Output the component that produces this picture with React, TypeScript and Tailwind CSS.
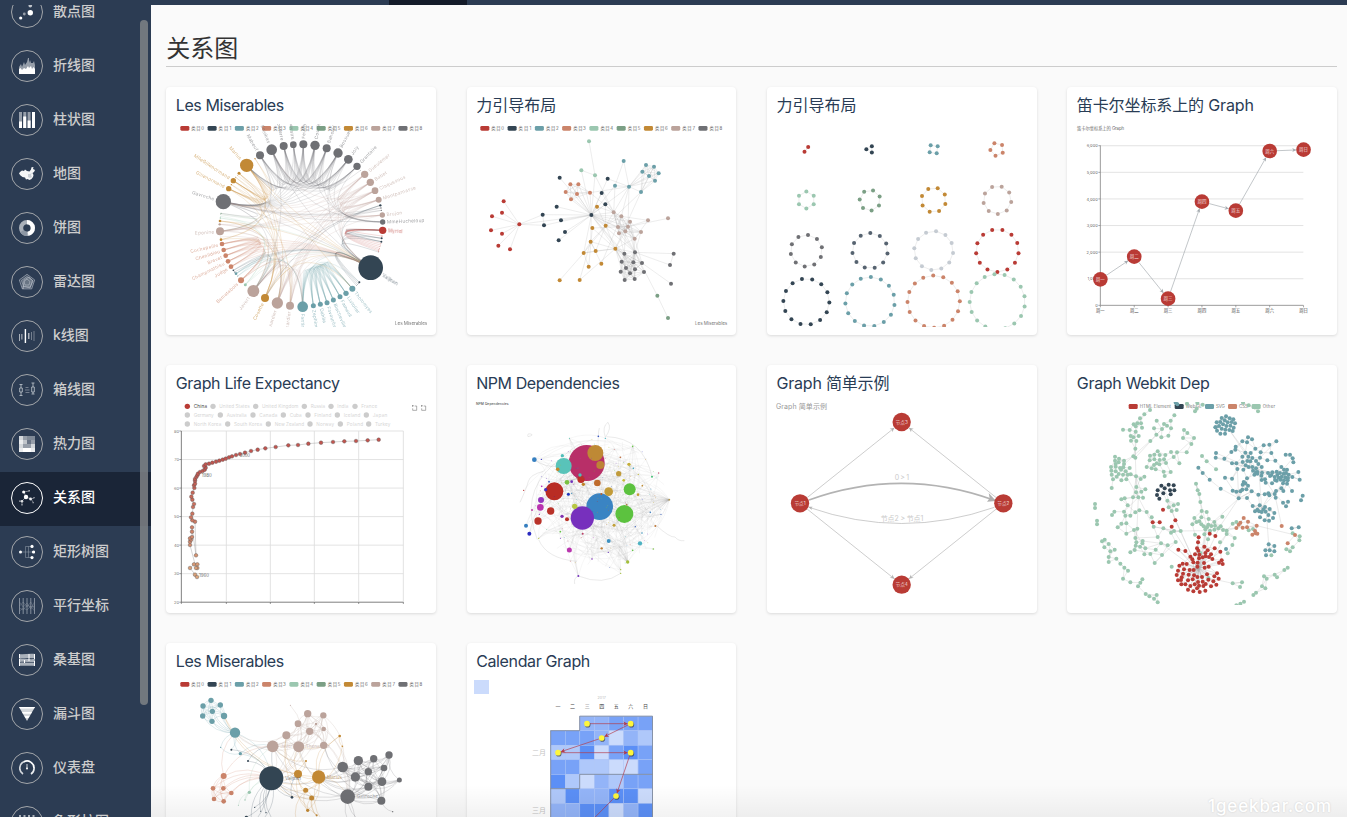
import type { ReactNode } from "react";

type Point = [number, number];
type NodeDef = [number, number, number]; // x, y, r

const PALETTE = [
  "#b93b35", "#334553", "#6b9fa8", "#cb846a", "#9bc7b0",
  "#7b9f85", "#c28935", "#bba39b", "#6f7074",
];

const parsePoints = (s: string): Point[] =>
  s.trim().split(/\s+/).map((p) => p.split(",").map(Number) as Point);

const parseNodes = (s: string): NodeDef[] =>
  s.trim().split(/\s+/).map((p) => p.split(",").map(Number) as NodeDef);

// small seeded generator so the dense graphs always come out the same
function seeded(seed: number) {
  let s = seed;
  return () => {
    s = (s * 16807) % 2147483647;
    return s / 2147483647;
  };
}

/* ---------- sidebar ---------- */

const CHINA = "M1 6L3 4.5L5 5L6 3.5L8 5L10.5 5.5L12 3.5L12.5 1.2L14.5 1L14 3L16 4L15 6L13.5 7L14.5 9L14 11L12.5 13L10.5 14L8.5 13L7 13.5L6 11.5L3.5 11L1.5 9.5L0 7.5Z";

const HEAT = [8, 5, 4, 4, 9, 7, 3, 5, 8, 5, 5, 8, 9, 10, 10, 9];

const icons: Record<string, ReactNode> = {
  scatter: (
    <>
      <circle cx="11.3" cy="1.7" r="1.8" opacity=".7" />
      <circle cx="11.3" cy="8.7" r="2.7" />
      <circle cx="5.3" cy="10" r="1.4" opacity=".5" />
      <circle cx="1.7" cy="14" r="1.6" />
    </>
  ),
  line: (
    <>
      <path opacity=".5" d="M0 16V9l2-3 1 3 2-5 1 3 2-3 1-4h1v5l1-3 1 3 2 0 1-2 1 4v9z" />
      <path d="M0 16v-5l1.500-1 1.500 2 2-2 2 1 2-3 1 2 2-2 1 3 1.500-2L16 11v5z" />
    </>
  ),
  bar: (
    <>
      <path opacity=".5" d="M0 0h3v16h-3zM4.300 0h3v16h-3zM8.600 0h3v16h-3z" />
      <path d="M0 9.500h3V16H0zM4.200 4.500h3V16h-3zM8.600 8.500h3V16h-3zM13 0h3v16h-3z" />
    </>
  ),
  map: (
    <>
      <path opacity=".95" d={CHINA} />
      <path fill="#9aa4b0" d="M9 8h2l2-1-1 2 1 2-2 1-2-1z" opacity=".45" />
    </>
  ),
  pie: (
    <g fill="none" strokeWidth="4.200">
      <circle cx="8" cy="8" r="5.900" stroke="#aab1ba" />
      <path d="M8 13.900A5.900 5.900 0 0 1 3 11.200" stroke="#8d97a4" />
      <path d="M8 2.100A5.900 5.900 0 0 1 9 13.800" stroke="#fff" />
    </g>
  ),
  radar: (
    <g fill="#ffffff1c" stroke="#b9c0c9" strokeWidth=".6">
      <path d="M8 .3l7.700 5.600-3 9H3.300l-3-9z" />
      <path d="M8 2.500l5.500 4-2.200 6.500H4.700L2.500 6.500z" />
      <path d="M8 5l3 2.500-1 3.500H6L5 7.500zM4 15l1-9 5-3 4 4-3 7-7-2z" />
    </g>
  ),
  candle: (
    <>
      <path d="M5.700 1h1.400v14H5.700z" />
      <path opacity=".85" d="M2.500 6h.8v5.500h-.8z" />
      <path opacity=".6" d="M0 6h1v7H0zM9 5h1.500v6H9z" />
      <path opacity=".35" d="M12 4h1v8h-1zM14.500 3h1v10h-1z" />
    </>
  ),
  box: (
    <g fill="none" stroke="#c3c9d0" strokeWidth=".8">
      <path d="M.500 2.500h3M2 2.500V6M.700 6h2.600v4H.700zM2 10v3.500M.500 13.500h3" />
      <path opacity=".6" d="M6.500 5.500h3M6 8h4.500M6.500 10.500h4" />
      <path d="M12.500 1h3M14 1v4M12.700 5h2.600v5h-2.600zM14 10v2M12.500 12h3" />
    </g>
  ),
  heat: (
    <g shapeRendering="crispEdges">
      {HEAT.map((v, i) => (
        <rect key={i} x={(i % 4) * 4} y={Math.floor(i / 4) * 4} width="4" height="4" opacity={v / 10} />
      ))}
    </g>
  ),
  graph: (
    <>
      <path stroke="#fff" strokeWidth=".6" opacity=".7" fill="none" d="M7 7L5 2L10 1M7 7L12 9L15 8M12 9L14 12M7 7L3 11L1 11M3 11L3 14M5 2L3 2" />
      <circle cx="7" cy="7" r="2.200" />
      <circle cx="4.700" cy="2" r="1.500" />
      <circle cx="11.500" cy="9" r="1.400" opacity=".9" />
      <circle cx="3" cy="11.300" r="1.300" opacity=".8" />
      <path opacity=".6" d="M9.500 0h1.500v1.500H9.500zM14.500 7h1.200v1.200h-1.200zM13.500 12h1.300v1.300h-1.300zM0 10.500h1.200v1.200H0zM2.300 14h1.400v1.400H2.300z" />
    </>
  ),
  tree: (
    <>
      <path fill="none" stroke="#9aa4b0" strokeWidth=".5" d="M1 8h14M6.500 2.500h7M6.500 2.500v11h7M9.500 2.500v11" />
      <circle cx="1.500" cy="8" r="1.500" />
      <circle cx="13" cy="2.400" r="1.600" />
      <circle cx="14.500" cy="8" r="1.600" />
      <circle cx="13" cy="13.600" r="1.600" />
    </>
  ),
  parallel: (
    <g fill="none" stroke="#98a1ad" strokeWidth=".5">
      <path strokeWidth=".8" d="M.500 0v16M4.200 0v16M8 0v16M11.800 0v16M15.500 0v16" />
      <path opacity=".7" d="M.500 4l3.700 5L8 5l3.800 6 3.700-7M.500 8L4.200 4 8 9l3.800-5 3.700 7M.500 13l3.700-3L8 12l3.800-4 3.700 5M.500 10l3.700 2L8 7l3.800 2 3.700-1" />
    </g>
  ),
  sankey: (
    <>
      <path opacity=".6" d="M0 2c5 .6 10-.6 16 0v4c-5 .6-10-.6-16 .4zM0 6.800c5-1 11 1.300 16 0v3.400c-5 .6-10-1-16 0zM0 10.700c5-.6 11 0 16 .3V14c-5-.6-11 0-16-.3z" />
      <path d="M0 2h1v4H0zM0 7h1v7H0zM15 2h1v5h-1zM15 9h1v5h-1zM9.500 2h1v7h-1zM5 8h1v3H5z" />
    </>
  ),
  funnel: (
    <>
      <path opacity=".8" d="M0 1h16L8 15z" />
      <path d="M0 1h16l-1 1.500H1zM3 6h10l-1 1.800H4zM5.500 10h5L9.500 12h-3z" />
    </>
  ),
  gauge: (
    <g fill="none">
      <path stroke="#d4d8dd" strokeWidth="1.700" d="M4 14A7 7 0 0 1 5.500 1.500" />
      <path stroke="#fff" strokeWidth="1.700" d="M5 1.700A7 7 0 0 1 15 8" />
      <path stroke="#eceef0" strokeWidth="1.700" d="M15 7.500A7 7 0 0 1 12 14" />
      <path stroke="#fff" strokeWidth=".8" d="M8 4v4" />
      <circle cx="8" cy="8.500" r="1" fill="#fff" />
    </g>
  ),
  pictorial: (
    <>
      {[1, 5.500, 10, 14.500].map((x) => (
        <path key={x} opacity=".6" d={`M${x} 1v14`} stroke="#fff" strokeWidth="2" strokeDasharray="2 1.500" />
      ))}
    </>
  ),
};

const menu: [string, string][] = [
  ["散点图", "scatter"], ["折线图", "line"], ["柱状图", "bar"], ["地图", "map"],
  ["饼图", "pie"], ["雷达图", "radar"], ["k线图", "candle"], ["箱线图", "box"],
  ["热力图", "heat"], ["关系图", "graph"], ["矩形树图", "tree"], ["平行坐标", "parallel"],
  ["桑基图", "sankey"], ["漏斗图", "funnel"], ["仪表盘", "gauge"], ["象形柱图", "pictorial"],
];

function Sidebar() {
  return (
    <aside className="relative w-[151px] shrink-0 overflow-hidden bg-[#2c3c53]">
      <ul className="-mt-[19px]">
        {menu.map(([label, icon]) => {
          const active = label === "关系图";
          return (
            <li
              key={label}
              className={`flex h-[54px] items-start pl-[11px] pt-[10px] ${
                active ? "bg-[#1a2537] text-white" : "text-[#cdcdcd]"
              }`}
            >
              <span
                className={`grid size-8 shrink-0 place-items-center rounded-full border ${
                  active ? "border-white" : "border-[#a3a6aa]"
                }`}
              >
                <svg className="size-4" viewBox="0 0 16 16" fill="#fff">
                  {icons[icon]}
                </svg>
              </span>
              <span className="ml-[10px] mt-[4px] whitespace-nowrap text-[14px] font-medium leading-[22px]">{label}</span>
            </li>
          );
        })}
      </ul>
      <div className="absolute left-[140px] top-[15px] h-[685px] w-2 rounded-full bg-[#858789]/80" />
    </aside>
  );
}

/* ---------- Les Miserables data ---------- */

const NAMES: Record<number, string> = {
  0: "Myriel", 11: "Valjean", 16: "Tholomyes", 17: "Listolier", 18: "Fameuil", 19: "Blacheville",
  20: "Favourite", 21: "Dahlia", 22: "Zephine", 23: "Fantine", 24: "MmeThenardier", 25: "Thenardier",
  26: "Cosette", 27: "Javert", 29: "Bamatabois", 34: "Judge", 35: "Champmathieu", 36: "Brevet",
  37: "Chenildieu", 38: "Cochepaille", 41: "Eponine", 48: "Gavroche", 49: "Gillenormand",
  51: "MlleGillenormand", 55: "Marius", 57: "Mabeuf", 58: "Enjolras", 59: "Combeferre",
  60: "Prouvaire", 61: "Feuilly", 62: "Courfeyrac", 63: "Bahorel", 64: "Bossuet", 65: "Joly",
  66: "Grantaire", 68: "Gueulemer", 69: "Babet", 70: "Claquesous", 71: "Montparnasse",
  75: "Brujon", 76: "MmeHucheloup",
};

const CATEGORY =
  "0011000000111111222222227767432211333336777644558666666668888888888877771887".split("").map(Number);
CATEGORY.push(8);

const LINKS: Record<number, number[]> = {
  1: [0], 2: [0], 3: [0, 2], 4: [0], 5: [0], 6: [0], 7: [0], 8: [0], 9: [0],
  11: [10, 3, 2, 0], 12: [11], 13: [11], 14: [11], 15: [11], 17: [16], 18: [16, 17],
  19: [16, 17, 18], 20: [16, 17, 18, 19], 21: [16, 17, 18, 19, 20], 22: [16, 17, 18, 19, 20, 21],
  23: [16, 17, 18, 19, 20, 21, 22, 12, 11], 24: [23, 11], 25: [24, 23, 11], 26: [24, 11, 16, 25],
  27: [11, 23, 25, 24, 26], 28: [11, 27], 29: [23, 27, 11], 30: [23], 31: [30, 11, 23, 27],
  32: [11], 33: [11, 27], 34: [11, 29], 35: [11, 34, 29], 36: [34, 35, 11, 29],
  37: [34, 35, 36, 11, 29], 38: [34, 35, 36, 37, 11, 29], 39: [25], 40: [25], 41: [24, 25],
  42: [41, 25, 24], 43: [11, 26, 27], 44: [28, 11], 45: [28], 47: [46], 48: [47, 25, 27, 11],
  49: [26, 11], 50: [49, 24], 51: [49, 26, 11], 52: [51, 39], 53: [51], 54: [51, 49, 26],
  55: [51, 49, 39, 54, 26, 11, 16, 25, 41, 48], 56: [49, 55], 57: [55, 41, 48],
  58: [55, 48, 27, 57, 11], 59: [58, 55, 48, 57], 60: [48, 58, 59], 61: [48, 58, 60, 59, 57, 55],
  62: [55, 58, 59, 48, 57, 41, 61, 60], 63: [59, 48, 62, 57, 58, 61, 60, 55],
  64: [55, 62, 48, 63, 58, 61, 60, 59, 57, 11], 65: [63, 64, 48, 62, 58, 61, 60, 59, 57, 55],
  66: [64, 58, 59, 62, 65, 48, 63, 61, 60], 67: [57], 68: [25, 11, 24, 27, 48, 41],
  69: [25, 68, 11, 24, 27, 48, 41], 70: [25, 69, 68, 11, 24, 27, 41, 58],
  71: [27, 69, 68, 70, 11, 48, 41, 25], 72: [26, 27, 11], 73: [48], 74: [48, 73],
  75: [69, 68, 25, 48, 41, 70, 71], 76: [64, 65, 66, 63, 62, 48, 58],
};

const EDGES: Point[] = Object.entries(LINKS).flatMap(([s, ts]) => ts.map((t) => [Number(s), t] as Point));

const CIRCULAR = parseNodes(`
668,451,11 666,468,1.500 665,475,3 664,485,3 663,490,1 662,495,1 660,500,1 659,505,1 657,509,1 656,513,1.500
655,516,1 632,563,37 598,607,3 595,610,1 592,613,1 589,616,1 577,626,9 558,640,8 540,650,7.500 520,660,7.500
501,668,7.500 481,673,7.500 460,677,7.500 428,680,16 390,677,12 352,669,17 315,654,12 280,633,18 256,614,4.500 243,601,9
233,588,1.500 228,581,4 224,576,1.500 220,571,2.500 213,560,7 204,544,7 197,527,7 191,510,7 186,492,7 183,479,4
181,471,1 180,454,12 179,433,3.500 180,423,4 181,414,2 182,409,1 182,404,1 183,400,2 190,365,23 206,326,8
214,314,2 220,302,8 227,292,1.500 232,286,1 237,280,4.500 260,256,20 285,236,2 300,226,12 335,209,16 371,198,12
400,194,10 430,193,12 465,196,14 500,205,12 534,219,14 565,238,13 591,259,11 602,271,1 614,283,11 631,307,11
645,332,10 656,359,9 661,376,3.500 663,384,2 664,391,2 667,405,8 668,426,8`);

const FORCE = parsePoints(`
178,433 131,364 248,404 252,436 126,398 96,409 93,451 126,461 115,497 150,508
299,293 394,405 443,296 290,380 303,421 315,456 543,336 558,255 582,260 547,275
596,280 567,288 585,302 507,320 484,409 504,440 437,437 461,397 405,286 390,338
491,243 465,317 296,481 425,339 331,313 355,313 317,336 351,342 333,358 397,444
624,415 524,476 564,421 411,380 364,271 387,184 624,714 592,647 525,517 392,485
424,551 371,519 386,560 299,601 407,513 466,506 359,600 546,549 493,521 485,545
482,575 498,564 520,547 510,580 525,568 494,600 524,597 633,611 474,441 477,460
496,454 510,425 436,373 641,521 630,555 543,456 552,576`).map(([x, y]): NodeDef => [x, y, 6]);

const SPRING = parseNodes(`
170,640,11 120,640,2 259,544,5 300,560,3 100,660,2 90,680,2 110,690,2 140,700,2 160,700,2 200,700,2
284,514,2 334,427,36 214,341,3 318,530,2 302,526,1.500 334,545,2 192,240,9.500 153,193,8 129,210,8 181,207,8
157,226,8 128,240,8 156,256,8 225,290,15.500 379,298,12 416,332,16.500 414,414,12 338,331,17.500 268,469,5 191,420,9
182,334,2 241,353,5 275,560,2 264,375,3 190,457,7 159,457,7 214,471,7 162,489,7 191,496,7 539,300,4
391,208,1.500 491,328,11 468,264,3.500 438,375,3 255,492,2 235,508,1.500 560,700,2 560,640,2 563,482,22 455,486,7.500
470,538,3 437,463,7.500 547,331,2.500 410,560,2 443,523,5 476,423,20 490,560,2 664,494,12 548,393,16 595,374,14
672,396,10 641,368,11 586,423,14 625,407,11 625,452,12 666,437,13 687,357,11 698,527,2 443,233,11 414,263,10
490,238,9.500 449,286,11 396,484,4 575,570,2 610,560,2 491,279,7 718,432,7.500`);

function Legend() {
  return (
    <g fontSize="13" fill="#666">
      {PALETTE.map((c, i) => (
        <g key={c} transform={`translate(${61 + i * 81.800} 138)`}>
          <rect width="27" height="14" rx="4" fill={c} />
          <text x="33" y="12" textLength="38">{`类目${i}`}</text>
        </g>
      ))}
    </g>
  );
}

function edgePath(a: NodeDef, b: NodeDef, mode: string) {
  const mx = (a[0] + b[0]) / 2;
  const my = (a[1] + b[1]) / 2;
  if (mode === "straight") return `M${a[0]} ${a[1]}L${b[0]} ${b[1]}`;
  if (mode === "circular")
    return `M${a[0]} ${a[1]}Q${424 * 0.9 + mx * 0.1} ${436 * 0.9 + my * 0.1} ${b[0]} ${b[1]}`;
  return `M${a[0]} ${a[1]}Q${mx - (a[1] - b[1]) * 0.3} ${my - (b[0] - a[0]) * 0.3} ${b[0]} ${b[1]}`;
}

function LesMiserables({ nodes, mode }: { nodes: NodeDef[]; mode: "circular" | "straight" | "spring" }) {
  return (
    <>
      <Legend />
      <g fill="none" strokeWidth={mode === "circular" ? 1.300 : 1.500}>
        {EDGES.map(([s, t], i) => (
          <path
            key={i}
            d={edgePath(nodes[s], nodes[t], mode)}
            stroke={mode === "straight" ? "#aaa" : PALETTE[CATEGORY[s]]}
            opacity={mode === "straight" ? 0.42 : 0.4}
          />
        ))}
      </g>
      {nodes.map(([x, y, r], i) => (
        <circle key={i} cx={x} cy={y} r={r} fill={PALETTE[CATEGORY[i]]} />
      ))}
      {mode === "circular" && (
        <g fontSize="14" opacity=".65">
          {Object.entries(NAMES).map(([id, name]) => {
            const i = Number(id);
            const [x, y, r] = nodes[i];
            const deg = (Math.atan2(y - 436, x - 424) * 180) / Math.PI;
            const flip = x < 424;
            return (
              <text
                key={id}
                transform={`translate(${x} ${y}) rotate(${flip ? deg + 180 : deg})`}
                x={flip ? -r - 5 : r + 5}
                y="5"
                textAnchor={flip ? "end" : "start"}
                letterSpacing=".7"
                fill={PALETTE[CATEGORY[i]]}
              >
                {name}
              </text>
            );
          })}
        </g>
      )}
      {mode === "spring" && (
        <g fontSize="14" opacity=".6">
          {[11, 25, 27, 48, 55].map((i) => (
            <text key={i} x={nodes[i][0] + nodes[i][2] + 5} y={nodes[i][1] + 5} fill={PALETTE[CATEGORY[i]]}>
              {NAMES[i]}
            </text>
          ))}
        </g>
      )}
      <text x="705" y="734" fontSize="14" fill="#777" textLength="97">Les Miserables</text>
    </>
  );
}

/* ---------- ring force layout ---------- */

// cx, cy, radius, first angle, colour; ring i holds i + 2 nodes
const RINGS: [number, number, number, number, string][] = [
  [139, 208, 9, -52, PALETTE[0]], [330, 208, 11, 180, PALETTE[1]], [521, 208, 15, -127, PALETTE[2]], [711, 208, 20, -113, PALETTE[3]],
  [139, 360, 25.500, -90, PALETTE[4]], [330, 361, 31, -73, PALETTE[5]], [521, 360, 37, -116, PALETTE[6]], [712, 360, 42, -112, PALETTE[7]],
  [139, 512, 47.500, -84, PALETTE[8]], [330, 512, 53, -89, "#566370"], [521, 512, 58.500, -83, "#c5cbd2"], [712, 512, 64, -104, PALETTE[0]],
  [139, 665, 69, -101, PALETTE[1]], [330, 665, 74, -88, PALETTE[2]], [521, 665, 78.500, -91, PALETTE[3]], [712, 665, 83, -96, PALETTE[4]],
];

function Rings() {
  return (
    <>
      {RINGS.map(([cx, cy, r, start, color], i) => {
        const n = i + 2;
        const pts = Array.from({ length: n }, (_, k) => {
          const a = ((start + (360 / n) * k) * Math.PI) / 180;
          return [cx + r * Math.cos(a), cy + r * Math.sin(a)];
        });
        return (
          <g key={i} fill={color}>
            <polygon points={pts.map((p) => p.join(",")).join(" ")} fill="none" stroke="#ccc" strokeWidth="1.500" opacity=".7" />
            {pts.map(([x, y], k) => (
              <circle key={k} cx={x} cy={y} r="6" />
            ))}
          </g>
        );
      })}
    </>
  );
}

/* ---------- cartesian graph ---------- */

const WEEK = ["周一", "周二", "周三", "周四", "周五", "周六", "周日"];
const WEEK_Y = [598, 530, 656, 365, 392, 213, 209];

function Arrow({ a, b, r, color, size = 10 }: { a: Point; b: Point; r: number; color: string; size?: number }) {
  const t = Math.atan2(b[1] - a[1], b[0] - a[0]);
  const x1 = a[0] + r * Math.cos(t);
  const y1 = a[1] + r * Math.sin(t);
  const x2 = b[0] - r * Math.cos(t);
  const y2 = b[1] - r * Math.sin(t);
  return (
    <>
      <path d={`M${x1} ${y1}L${x2} ${y2}`} stroke={color} strokeWidth="2" />
      <path
        d={`M0 0L${-size} ${-size / 2}L${-size * 0.7} 0L${-size} ${size / 2}Z`}
        fill={color}
        transform={`translate(${x2} ${y2}) rotate(${(t * 180) / Math.PI})`}
      />
    </>
  );
}

function Cartesian() {
  const pts = WEEK_Y.map((y, i): Point => [121 + i * 101.600, y]);
  return (
    <>
      <text x="51" y="150" fontSize="13" fill="#666" textLength="141">笛卡尔坐标系上的 Graph</text>
      {[0, 1, 2, 3, 4, 5, 6].map((v) => (
        <g key={v}>
          <path d={`M121 ${676 - v * 79.800}H730`} stroke={v ? "#ddd" : "#888"} strokeWidth="2.500" />
          <path d={`M115 ${676 - v * 79.800}H121M${121 + v * 101.600} 676v6`} stroke="#777" strokeWidth="2" />
          <text x="113" y={681 - v * 79.800} fontSize="12" fill="#666" textAnchor="end">
            {v ? `${v},000` : "0"}
          </text>
          <text x={121 + v * 101.600} y="695" fontSize="13" fill="#444" textAnchor="middle">{WEEK[v]}</text>
        </g>
      ))}
      <path d="M121 196V676" stroke="#888" strokeWidth="2.500" />
      {pts.slice(1).map((p, i) => (
        <Arrow key={i} a={pts[i]} b={p} r={22} color="#a3a9ae" size={12} />
      ))}
      {pts.map(([x, y], i) => (
        <g key={i}>
          <circle cx={x} cy={y} r="22" fill={PALETTE[0]} />
          <text x={x} y={y + 5} fontSize="13.500" fill="#fff" fillOpacity=".85" textAnchor="middle">{WEEK[i]}</text>
        </g>
      ))}
    </>
  );
}

/* ---------- life expectancy ---------- */

const LIFE = parsePoints(`
105,650 111,657 90,630 102,619 112,619 112,630 108,630 90,561 90,551 93,545 90,541 96,537 96,521 96,508
108,592 105,491 97,487 93,478 97,467 99,447 102,438 97,425 94,416 98,404 103,390 102,382 105,377 105,368 105,363
109,357 112,352 114,347 120,342 128,339 134,335 137,329 132,324 137,319 147,317 157,314 168,311 178,308 188,305
197,302 207,298 216,295 228,291 240,288 255,284 273,279 293,275 316,271 347,267 385,262 414,261 445,257 483,254
519,252 553,250 588,249 623,247 656,245`);

const COUNTRIES: [string, number, number, number][] = [
  ["China", 82, 145, 40], ["United States", 159, 145, 91], ["United Kingdom", 287, 145, 109], ["Russia", 433, 145, 43],
  ["India", 513, 145, 33], ["France", 585, 145, 48], ["Germany", 82, 171, 60], ["Australia", 181, 171, 60],
  ["Canada", 279, 171, 54], ["Cuba", 370, 171, 36], ["Finland", 444, 171, 51], ["Iceland", 532, 171, 50],
  ["Japan", 619, 171, 44], ["North Korea", 82, 198, 83], ["South Korea", 203, 198, 84], ["New Zealand", 325, 198, 88],
  ["Norway", 450, 198, 53], ["Poland", 541, 198, 49], ["Turkey", 626, 198, 46],
];

function LifeExpectancy() {
  return (
    <>
      {COUNTRIES.map(([name, x, y, w]) => (
        <g key={name}>
          <circle cx={x} cy={y} r="8" fill={name === "China" ? PALETTE[0] : "#ccc"} />
          <text x={x + 19} y={y + 5} fontSize="14" fill={name === "China" ? "#444" : "#d6d6d6"} textLength={w}>{name}</text>
        </g>
      ))}
      <g fill="none" stroke="#777" strokeWidth="1.800">
        <path d="M756 143h5M758 141v6M764 144h6v13h-12v-6" />
        <path d="M783 143h5M785 141v6M791 144h6v13h-12v-6" />
      </g>
      {[0, 1, 2, 3, 4, 5, 6].map((i) => (
        <g key={i}>
          <path d={`M64 ${219 + i * 85.600}H730`} stroke={i === 6 ? "#666" : "#ddd"} strokeWidth="2.500" />
          <path d={`M58 ${219 + i * 85.600}H64`} stroke="#666" strokeWidth="2" />
          <text x="57" y={224 + i * 85.600} fontSize="12" fill="#777" textAnchor="end">{80 - i * 10}</text>
        </g>
      ))}
      {[199, 331, 463, 596, 730].map((x) => (
        <path key={x} d={`M${x} 219V732`} stroke="#ddd" strokeWidth="2.500" />
      ))}
      {[64, 199, 331, 463, 596, 730].map((x) => (
        <path key={x} d={`M${x} 732v6`} stroke="#666" strokeWidth="2" />
      ))}
      <path d="M64 219V733" stroke="#666" strokeWidth="2.500" />
      <polyline points={LIFE.map((p) => p.join(",")).join(" ")} fill="none" stroke="#888" strokeWidth="1.500" opacity=".7" />
      {LIFE.map(([x, y], i) => {
        const t = Math.max(0, Math.min(1, (660 - y) / 330));
        const mix = (a: number, b: number) => Math.round(a + (b - a) * t);
        return (
          <circle key={i} cx={x} cy={y} r="5.500" fill={`rgb(${mix(218, 194)},${mix(163, 84)},${mix(122, 78)})`} stroke="#555" strokeWidth="1.200" />
        );
      })}
      <g fontSize="13" fill="#666">
        <text x="117" y="656" textLength="30">1960</text>
        <text x="125" y="357" textLength="30">1980</text>
        <text x="240" y="297" textLength="30">2000</text>
      </g>
    </>
  );
}

/* ---------- npm dependencies ---------- */

const PACKAGES: [number, number, number, string][] = [
  [380, 315, 54, "#b82f68"], [406, 285, 24, "#be8935"], [421, 321, 12, "#bd8235"], [311, 324, 24, "#59c3b9"],
  [293, 334, 5.500, "#c38730"], [363, 364, 11, "#bd3029"], [360, 351, 5, "#4fbdb8"], [370, 379, 5, "#be8327"],
  [283, 400, 27, "#b92c24"], [419, 446, 40, "#3a84c3"], [367, 480, 35, "#7730bd"], [493, 468, 27, "#5cc23f"],
  [509, 394, 18, "#5cc23f"], [412, 375, 10, "#bf6b2c"], [446, 401, 13, "#c29b38"], [476, 347, 8, "#c09b3b"],
  [507, 319, 5, "#c4ad36"], [491, 367, 4, "#c4bd36"], [344, 445, 8, "#b7c742"], [321, 373, 7, "#7ac142"],
  [335, 371, 4, "#7130bd"], [257, 395, 5, "#4730bd"], [243, 426, 9, "#9437bf"], [241, 448, 10, "#b933af"],
  [272, 459, 11, "#b93229"], [234, 489, 11, "#b93229"], [321, 484, 6, "#b93229"], [306, 475, 5, "#8030b0"],
  [198, 503, 6, "#367fc0"], [208, 527, 6, "#2b2bc0"], [223, 305, 7, "#367fc0"], [244, 304, 2, "#2020b8"],
  [307, 293, 5, "#4fbdb8"], [325, 409, 4.500, "#1e35bd"], [328, 576, 7.500, "#b936ae"], [446, 549, 6, "#3f91c0"],
  [540, 556, 6.500, "#4eb2c2"], [503, 612, 5, "#a3bf3a"], [462, 502, 4.500, "#c2a038"], [415, 235, 2.500, "#3050c0"],
  [436, 241, 2, "#42b4c0"], [534, 410, 4, "#c49c36"], [628, 425, 2.500, "#b89b4d"], [355, 654, 3, "#7836c0"],
  [482, 646, 2, "#a0bf3a"], [482, 635, 2, "#a0bf3a"], [425, 571, 3.500, "#bd7a30"], [445, 583, 2, "#6d38c0"],
  [396, 603, 2.500, "#8a40c0"], [518, 577, 2.500, "#5cc23f"], [580, 573, 2.500, "#80c252"], [546, 525, 2.500, "#469ac0"],
  [571, 463, 2.500, "#4281c0"], [603, 469, 2, "#4d70c0"], [586, 504, 3, "#be7839"], [576, 356, 3, "#42bf75"],
  [520, 331, 2.500, "#42a6c0"], [535, 349, 2, "#c4bd36"], [547, 383, 2.500, "#bf8d36"], [596, 345, 2, "#c04d72"],
  [518, 265, 2.500, "#62c242"], [481, 298, 2.500, "#c27040"], [191, 397, 2, "#bd3030"], [245, 385, 2.500, "#b530bd"],
  [267, 371, 2.500, "#3052bd"], [216, 456, 3, "#bd40a4"], [238, 469, 2, "#9437bf"], [236, 541, 2, "#b7c742"],
  [301, 521, 2.500, "#62c242"], [301, 541, 1.500, "#7836c0"], [368, 527, 3, "#bd4068"], [328, 241, 1.500, "#42c0a5"],
  [335, 406, 2, "#3f91c0"], [424, 408, 3, "#be6327"], [500, 440, 2.500, "#be7839"], [526, 506, 2, "#3a62c3"],
];

function Npm() {
  const rnd = seeded(77);
  const inside = (): Point => {
    const a = rnd() * Math.PI * 2;
    const r = Math.pow(rnd(), 0.5);
    return [425 + 200 * r * Math.cos(a), 435 + 200 * r * Math.sin(a)];
  };
  const lines: string[] = [];
  const spots: Point[] = [];
  for (let i = 0; i < 310; i++) {
    const p = inside();
    const hub = PACKAGES[Math.floor(rnd() * PACKAGES.length)];
    spots.push(p);
    lines.push(
      `M${hub[0]} ${hub[1]}Q${(hub[0] + p[0]) / 2 + (p[1] - hub[1]) * 0.3} ${(hub[1] + p[1]) / 2 - (p[0] - hub[0]) * 0.3} ${p[0]} ${p[1]}`
    );
  }
  // fans into the two busiest leaf packages
  for (let i = 0; i < 40; i++) {
    const x = 460 + rnd() * 130;
    const y = 370 + rnd() * 170;
    lines.push(`M628 425Q${(628 + x) / 2} ${(425 + y) / 2 - 14} ${x} ${y}`);
  }
  for (let i = 0; i < 20; i++) {
    const x = 380 + rnd() * 180;
    const y = 480 + rnd() * 90;
    lines.push(`M503 612Q${(503 + x) / 2 + 12} ${(612 + y) / 2 - 12} ${x} ${y}`);
  }
  return (
    <>
      <text x="48" y="140" fontSize="10" fontWeight="500" fill="#555" textLength="98">NPM Dependencies</text>
      <g fill="none" stroke="#999" strokeWidth="1.300" strokeOpacity=".2">
        {lines.map((d, i) => (
          <path key={i} d={d} />
        ))}
        <path strokeOpacity=".45" d="M236 545Q260 602 350 610M355 654Q430 684 482 646M586 500Q630 540 645 537Q655 550 673 548M436 238Q425 205 444 193Q456 210 436 238M180 433Q200 390 205 370T250 340M204 236Q200 225 212 228T204 236M232 545Q180 410 275 325T365 262M440 236Q550 240 576 356M415 235Q415 220 418 210M355 654Q340 660 344 678M223 305Q255 330 300 325" />
      </g>
      {PACKAGES.map(([x, y, r, c], i) => (
        <circle key={i} cx={x} cy={y} r={r} fill={c} />
      ))}
      {spots.slice(0, 95).map(([x, y], i) => (
        <circle key={i} cx={x} cy={y} r="1.400" fill={PACKAGES[i % PACKAGES.length][3]} opacity=".65" />
      ))}
    </>
  );
}

/* ---------- simple graph ---------- */

function SimpleGraph() {
  const left: Point = [120, 436];
  const right: Point = [730, 436];
  const top: Point = [425, 192];
  const bottom: Point = [425, 680];
  const nodes: [Point, string][] = [[left, "节点1"], [right, "节点2"], [top, "节点3"], [bottom, "节点4"]];
  return (
    <>
      <text x="48" y="154" fontSize="21" fill="#999" textLength="153">Graph 简单示例</text>
      <Arrow a={left} b={top} r={28} color="#b3b3b3" size={13} />
      <Arrow a={right} b={top} r={28} color="#b3b3b3" size={13} />
      <Arrow a={left} b={bottom} r={28} color="#b3b3b3" size={13} />
      <Arrow a={right} b={bottom} r={28} color="#b3b3b3" size={13} />
      <g fill="none" stroke="#b3b3b3">
        <path d="M147 426Q425 326 703 427" strokeWidth="5" />
        <path d="M147 448Q425 545 703 448" strokeWidth="2" />
      </g>
      <path d="M708 429L681 431L689 421L686 405Z" fill="#b0b0b0" />
      <path d="M144 446L158 446L154 450L156 456Z" fill="#b3b3b3" />
      <g fontSize="21" fill="#cbcbcb">
        <text x="404" y="367" textLength="43">{"0 > 1"}</text>
        <text x="362" y="488" textLength="128">{"节点2 > 节点1"}</text>
      </g>
      {nodes.map(([[x, y], label]) => (
        <g key={label}>
          <circle cx={x} cy={y} r="27.500" fill={PALETTE[0]} />
          <text x={x} y={y + 5} fontSize="14" fill="#fff" fillOpacity=".8" textAnchor="middle">{label}</text>
        </g>
      ))}
    </>
  );
}

/* ---------- webkit dependencies ---------- */

const WEBKIT: { color: string; points: Point[] }[] = [
  {
    color: PALETTE[4],
    points: parsePoints(`
270,156 253,169 343,172 240,181 290,188 332,188 189,215 221,199 232,196 243,196 227,205 246,209 209,216 227,221 212,234 220,238
236,234 213,248 229,249 226,272 271,249 289,230 306,213 312,198 321,203 333,211 304,238 325,233 282,211 372,216 382,225 369,240
402,240 394,258 380,283 351,283 293,280 333,282 341,297 358,316 316,291 299,291 283,290 270,293 269,307 283,304 299,306 312,304
318,315 298,319 290,316 282,321 260,327 275,331 287,334 311,341 332,342 314,354 165,296 177,302 165,308 192,308 192,318 167,318
153,327 176,313 167,326 180,330 190,328 197,340 209,330 154,338 167,340 183,335 155,350 176,348 189,350 203,350 212,349 170,356
159,364 184,367 199,364 220,295 226,299 228,355 242,363 253,356 229,387 256,394 155,390 244,401 228,403 219,418 235,418 249,419
194,421 184,424 203,442 238,457 226,463 260,462 163,461 192,461 211,473 196,473 156,471 275,478 184,497 199,496 173,508 199,527
222,516 232,512 226,540 281,506 310,511 229,553 248,549 227,563 256,571 224,576 211,583 240,566 247,556 293,537 303,556 322,428
354,438 341,442 326,448 335,459 350,456 333,524 323,562 347,552 342,519 362,519 287,575 306,591 253,589 271,588 284,615 335,626
105,438 105,450 111,488 111,499 134,545 126,550 146,558 133,568 151,580 164,575 146,597 146,612 169,602 181,617 193,629 204,638
189,662 211,673 247,664 241,674 234,685 257,708 268,715 290,711 282,722 293,733 426,294 440,310 468,334 408,377 413,397 418,408
421,432 403,480 425,459 440,462 409,492 418,490 424,478 446,483 397,499 424,499 463,492 445,500 431,505 441,508 454,504 465,503
487,476 482,505 475,511 489,516 450,518 463,515 436,514 500,518 500,528 518,497 405,530 433,529 444,544 480,553 524,540 517,561
503,586 529,492 405,160 410,152 381,137 412,135 428,140 549,134 566,142 583,148 594,160 683,629 673,636 644,650 651,658 612,655
620,662 606,685 616,691 588,704 580,711 552,731 541,737 529,742 546,673 518,676 540,687 690,580 679,574 698,568 718,547 719,535
698,526 634,592 566,517 579,513 445,660 421,585`),
  },
  {
    color: PALETTE[2],
    points: parsePoints(`
498,175 485,180 509,181 520,184 470,193 481,192 494,187 503,193 515,192 525,196 466,208 477,204 489,199 499,204 511,203 521,209
471,218 485,212 496,215 508,216 518,219 481,227 495,227 467,208 347,134 352,139 564,238 547,250 561,253 576,244 527,266 526,275
514,282 468,285 467,299 493,302 586,272 611,262 628,260 649,250 556,284 572,285 547,296 565,296 577,300 602,283 600,299 634,285
646,308 622,307 516,316 529,316 548,312 562,309 571,310 588,309 595,318 557,322 566,327 577,327 588,331 605,327 532,333 550,335
579,338 592,342 606,344 604,353 624,345 637,343 634,351 615,364 617,374 605,366 583,350 588,343 592,347 644,357 652,351 650,341
664,327 672,335 681,335 660,345 671,347 678,345 686,350 656,359 665,356 676,358 684,360 697,357 683,367 672,367 681,377 669,376
662,365 650,368 636,376 561,361 551,372 548,380 564,383 556,376 541,400 547,395 559,394 575,400 518,398 529,401 536,421 516,362
495,359 415,329 428,345 449,365 482,392 677,290 690,290 698,301 700,313 715,342 719,365 728,413 723,427 684,431 669,434 678,445
696,399 670,399 664,391 648,399 644,408 625,406 614,409 628,412 647,419 595,410 561,420 578,444 599,442 610,454 585,460 597,460
615,447 605,462 629,453 643,465 617,461 625,471 639,480 627,488 614,487 600,478 592,455 626,559 643,564 616,577 629,577 643,580
618,592 695,511 716,508 498,573 630,354 645,366`),
  },
  {
    color: PALETTE[1],
    points: parsePoints("304,383 326,380 341,382 293,397 314,391 330,397 343,397 291,411 310,406 332,409 298,422"),
  },
  {
    color: PALETTE[3],
    points: parsePoints("551,480 564,491 541,494 536,500 529,510 548,509 561,508 590,503 585,519 587,526 577,530 592,527 665,504 705,531 683,556"),
  },
  {
    color: PALETTE[0],
    points: parsePoints(`
309,455 278,493 299,493 346,487 335,506 449,527 466,534 416,538 414,553 355,575 376,579 411,571 433,566 464,571 415,578 443,577
481,581 405,589 391,596 418,590 436,585 453,589 397,604 417,601 428,598 437,595 447,597 457,603 485,607 477,614 488,618 358,623
368,617 380,618 400,613 413,614 432,615 354,638 372,634 401,636 412,626 434,629 446,626 350,651 369,647 386,650 402,652 412,657
426,657 441,649 471,646 476,662 354,667 365,658 384,667 398,664 414,672 428,671 445,665 460,670 463,655 364,679 376,679 391,684
404,679 417,683 430,684 437,678 453,685 469,680 384,695 400,700 411,691 419,702 436,698 363,666 389,636`),
  },
];

const WEBKIT_LINKS = `
M253 169L226 221L226 299L229 387L235 418L184 330M270 249L180 330M306 213L226 299M402 240L341 297L298 319
M229 553L235 418L281 506L342 519L450 518M228 355L244 401M284 615L347 552M184 424L219 418L235 418L192 461
M416 640L355 575M416 640L362 519L310 406M416 640L346 487L314 391M416 640L303 556L256 571L222 516L199 527
M416 640L441 508L421 432L408 377M416 640L466 534L480 505L536 421L532 333M416 640L436 514L536 421L578 338
M450 518L590 503L705 531M508 216L560 285L590 335L680 350M508 216L571 310M527 266L577 327M649 250L600 299
M415 329L449 365L482 392L536 421L575 400L536 421L495 359M680 355L644 408L605 450M665 504L644 408L590 330
M620 475L626 559M605 450L595 320M698 301L665 340M719 365L680 350M440 310L468 334M445 660L518 676L546 673
M468 285L605 344M467 299L605 344M518 316L680 355M224 576L306 591M248 549L303 556L323 562M529 510L500 518
M393 599L342 519M444 544L436 585M434 615L436 514M457 604L500 528M229 355L211 473M293 537L226 540
M628 412L605 450M644 408L670 434M605 450L578 444M605 450L643 465M630 577L626 559M695 511L716 508M564 297L516 362`;

function Webkit() {
  // every node hangs on to its closest already placed neighbours
  const near = WEBKIT.flatMap(({ points }) =>
    points.flatMap((p, i) =>
      points
        .slice(0, i)
        .map((q) => ({ q, d: Math.hypot(p[0] - q[0], p[1] - q[1]) }))
        .filter(({ d }) => d < 34)
        .sort((a, b) => a.d - b.d)
        .slice(0, 2)
        .map(({ q }) => `M${p[0]} ${p[1]}L${q[0]} ${q[1]}`)
    )
  );
  const spokes = WEBKIT[4].points.slice(7).map(([x, y]) => `M416 630L${x} ${y}`);
  const legend: [string, number, number, string][] = [
    ["HTML Element", 206, 94, PALETTE[0]], ["WebGL", 344, 48, PALETTE[1]], ["SVG", 435, 26, PALETTE[2]],
    ["CSS", 504, 26, PALETTE[3]], ["Other", 575, 37, PALETTE[4]],
  ];
  return (
    <>
      {legend.map(([name, x, w, c]) => (
        <g key={name}>
          <rect x={x} y="138" width="27" height="15" rx="4" fill={c} />
          <text x={x + 33} y="150" fontSize="13" fill="#777" textLength={w}>{name}</text>
        </g>
      ))}
      <path d={near.join("") + spokes.join("") + WEBKIT_LINKS} fill="none" stroke="#aaa" strokeWidth="1.500" opacity=".5" />
      {WEBKIT.map(({ color, points }) =>
        points.map(([x, y], i) => <circle key={color + i} cx={x} cy={y} r="6" fill={color} />)
      )}
    </>
  );
}

/* ---------- calendar ---------- */

const BLUES: Record<string, string> = { a: "#cbdbfc", b: "#afc8fa", c: "#93b4f8", d: "#78a2f7", e: "#5b8ff6" };
const WEEKS = ["--ccddd", "dddcacb", "bbeaded", "ddbbaad", "ebacbdd", "becceea", "cceeace", "dcbaedc"];
const STOPS: Point[] = [[381, 263], [512, 263], [425, 306], [294, 350], [512, 350], [468, 480], [381, 568]];

function Calendar() {
  return (
    <>
      <rect x="42" y="132" width="45" height="42" fill="#cbdbfc" />
      <text x="425" y="189" fontSize="11" fill="#bbb" textAnchor="middle">2017</text>
      {"一二三四五六日".split("").map((d, i) => (
        <text key={d} x={294 + i * 43.700} y="217" fontSize="15" fill="#444" textAnchor="middle">{d}</text>
      ))}
      <text x="258" y="357" fontSize="21" fill="#c4c4c4" textAnchor="end">二月</text>
      <text x="258" y="531" fontSize="21" fill="#c4c4c4" textAnchor="end">三月</text>
      {WEEKS.map((row, r) =>
        row.split("").map((c, i) =>
          c === "-" ? null : (
            <rect
              key={`${r}-${i}`}
              x={272 + i * 43.700}
              y={240.500 + r * 43.600}
              width="43.700"
              height="43.600"
              fill={BLUES[c]}
              stroke="#a9c2f5"
              strokeWidth="1.500"
            />
          )
        )
      )}
      <path
        d="M272 600V284H359V240.500H577.500V600M272 458H359V415H577.500"
        fill="none"
        stroke="#7d8798"
        strokeWidth="2.500"
      />
      {STOPS.slice(1).map((p, i) => (
        <Arrow key={i} a={STOPS[i]} b={p} r={9} color="#b33a48" size={13} />
      ))}
      {STOPS.map(([x, y], i) => (
        <g key={i}>
          <circle cx={x + 2} cy={y + 3} r="8.500" fill="#333" opacity=".65" />
          <circle cx={x} cy={y} r="8.500" fill="#fdf63d" />
        </g>
      ))}
    </>
  );
}

/* ---------- page ---------- */

const cards: { title: string; tracking: string; chart: ReactNode }[] = [
  { title: "Les Miserables", tracking: "tracking-[-0.42px]", chart: <LesMiserables nodes={CIRCULAR} mode="circular" /> },
  { title: "力引导布局", tracking: "", chart: <LesMiserables nodes={FORCE} mode="straight" /> },
  { title: "力引导布局", tracking: "", chart: <Rings /> },
  { title: "笛卡尔坐标系上的 Graph", tracking: "tracking-[-0.12px]", chart: <Cartesian /> },
  { title: "Graph Life Expectancy", tracking: "tracking-[-0.35px]", chart: <LifeExpectancy /> },
  { title: "NPM Dependencies", tracking: "tracking-[-0.42px]", chart: <Npm /> },
  { title: "Graph 简单示例", tracking: "tracking-[-0.2px]", chart: <SimpleGraph /> },
  { title: "Graph Webkit Dep", tracking: "tracking-[-0.32px]", chart: <Webkit /> },
  { title: "Les Miserables", tracking: "tracking-[-0.42px]", chart: <LesMiserables nodes={SPRING} mode="spring" /> },
  { title: "Calendar Graph", tracking: "tracking-[-0.36px]", chart: <Calendar /> },
];

export default function App() {
  return (
    <div className="relative flex h-[817px] w-[1347px] flex-col overflow-hidden bg-[#fafafa] font-['Inter','Noto_Sans_CJK_SC',sans-serif]">
      <header className="h-[5px] shrink-0 bg-[#2c3c53]">
        <div className="ml-[389px] h-full w-[78px] bg-[#141b29]" />
      </header>
      <div className="flex min-h-0 flex-1">
        <Sidebar />
        <main className="min-w-0 flex-1 overflow-hidden pl-[15.2px] pr-[9.8px]">
          <h1 className="h-[62px] border-b border-[#ccc] pt-[26px] text-[24px] leading-[36px] text-[#333]">关系图</h1>
          <div className="mt-[20px] grid grid-cols-4 gap-x-[30.45px] gap-y-[30px]">
            {cards.map(({ title, tracking, chart }, i) => (
              <section key={i} className="h-[248px] rounded-[4px] bg-white shadow-[0_1px_3px_rgba(0,0,0,0.13)]">
                <h2 className={`h-[37px] whitespace-nowrap pl-[9.6px] pt-[6px] text-[16px] leading-[24px] text-[#293c55] ${tracking}`}>
                  {title}
                </h2>
                <svg className="block h-[203px] w-full overflow-hidden" viewBox={`${i % 4 ? 21 : 18} 132 809.700 609`}>
                  {chart}
                </svg>
              </section>
            ))}
          </div>
        </main>
      </div>
      <div className="pointer-events-none absolute bottom-0 left-[151px] right-0 h-8 bg-linear-to-b from-transparent to-black/5" />
      <div className="absolute bottom-[1px] right-[15px] text-[17px] font-medium leading-[20px] tracking-[0.9px] text-white [text-shadow:0_0_2px_rgba(0,0,0,0.17)]">
        1geekbar.com
      </div>
    </div>
  );
}
